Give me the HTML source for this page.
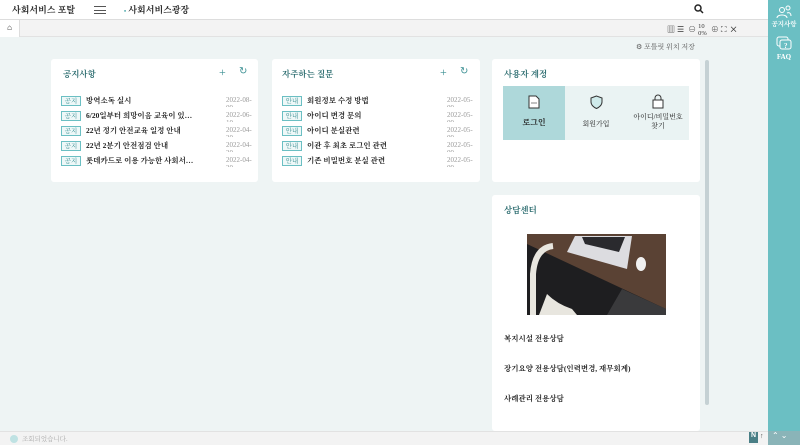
<!DOCTYPE html>
<html><head><meta charset="utf-8"><style>
*{margin:0;padding:0;box-sizing:border-box}
body{width:800px;height:445px;overflow:hidden;background:#eef4f4;font-family:"Liberation Serif","Noto Serif CJK SC",serif;color:#222;position:relative;font-size:8px}
.abs{position:absolute}
.top{left:0;top:0;width:768px;height:20px;background:#fff;border-bottom:1px solid #ddd}
.tabs{left:0;top:20px;width:768px;height:17px;background:#f3f3f3;border-bottom:1px solid #e2e2e2}
.side{left:768px;top:0;width:32px;height:445px;background:#6bbfc3;color:#fff;text-align:center;font-weight:bold}
.card{background:#fff;border-radius:3px}
.title{color:#2a6b6e;font-weight:bold;font-size:8.5px}
.row{position:absolute;left:10px;height:12px;font-size:7.5px;white-space:nowrap;font-weight:bold}
.tag{display:inline-block;border:1px solid #6bbfc3;color:#3a8f92;background:#eef8f8;font-size:6.5px;width:20px;text-align:center;height:10px;line-height:9px;margin-right:5px;vertical-align:middle;font-weight:normal}
.date{position:absolute;left:165px;color:#999;font-size:7px;top:1px;line-height:8px;height:11px;overflow:hidden;width:32px;font-weight:normal}
.ic{color:#3a8f92;font-size:12px;position:absolute;top:8px}
</style></head><body>
<div class="abs top">
 <div class="abs" style="left:12px;top:3px;font-size:9px;font-weight:bold">사회서비스 포탈</div>
 <div class="abs" style="left:94px;top:6px;width:12px;height:8px;border-top:1px solid #555;border-bottom:1px solid #555"><div style="margin-top:2.5px;border-top:1px solid #555"></div></div>
 <div class="abs" style="left:124px;top:3px;font-size:9px;font-weight:bold"><span style="color:#3a9fa3;font-size:6px">•</span> 사회서비스광장</div>
 <svg class="abs" style="left:694px;top:4px" width="10" height="10"><circle cx="4" cy="4" r="3" fill="none" stroke="#222" stroke-width="1.5"/><line x1="6.5" y1="6.5" x2="9" y2="9" stroke="#222" stroke-width="1.5"/></svg>
</div>
<div class="abs tabs">
 <div class="abs" style="left:0;top:0;width:20px;height:17px;background:#fff;border-right:1px solid #ddd;text-align:center;font-size:8px;line-height:16px">⌂</div>
 <div class="abs" style="left:667px;top:3px;font-size:8px;color:#333;white-space:nowrap">▥ ☰ &nbsp;⊖ <span style="display:inline-block;font-size:6.5px;line-height:7px;vertical-align:middle">10<br>0%</span> &nbsp;⊕ ⛶ &nbsp;✕</div>
</div>
<div class="abs" style="left:636px;top:42px;font-size:7px;color:#555">⚙ 포틀릿 위치 저장</div>
<div class="abs side">
 <svg style="margin-top:5px" width="16" height="14"><circle cx="6" cy="5" r="2.5" fill="none" stroke="#fff"/><path d="M1 13c0-4 10-4 10 0" fill="none" stroke="#fff"/><circle cx="12" cy="3" r="2" fill="none" stroke="#fff"/><path d="M11 8c2-1 4 0 4 3" fill="none" stroke="#fff"/></svg>
 <div style="font-size:6.5px;margin-top:-2px">공지사항</div>
 <svg style="margin-top:8px" width="16" height="15"><rect x="1" y="1" width="11" height="9" rx="2" fill="none" stroke="#fff"/><rect x="4" y="4" width="11" height="9" rx="2" fill="#6bbfc3" stroke="#fff"/><text x="8" y="12" font-size="7" fill="#fff">?</text></svg>
 <div style="font-size:7px">FAQ</div>
</div>
<div class="abs" style="left:705px;top:60px;width:4px;height:345px;background:#c5d1d4;border-radius:2px"></div>

<div class="abs card" style="left:51px;top:59px;width:207px;height:123px">
 <div class="abs title" style="left:12px;top:9px">공지사항</div>
 <div class="ic" style="left:168px;top:6px">+</div><div class="ic" style="left:188px;top:7px;font-size:10px">↻</div>
 <div class="row" style="top:36px"><span class="tag">공지</span>방역소독 실시<span class="date">2022-08-<br>09</span></div>
 <div class="row" style="top:51px"><span class="tag">공지</span>6/20일부터 희망이음 교육이 있…<span class="date">2022-06-<br>10</span></div>
 <div class="row" style="top:66px"><span class="tag">공지</span>22년 정기 안전교육 일정 안내<span class="date">2022-04-<br>20</span></div>
 <div class="row" style="top:81px"><span class="tag">공지</span>22년 2분기 안전점검 안내<span class="date">2022-04-<br>20</span></div>
 <div class="row" style="top:96px"><span class="tag">공지</span>롯데카드로 이용 가능한 사회서…<span class="date">2022-04-<br>20</span></div>
</div>
<div class="abs card" style="left:272px;top:59px;width:208px;height:123px">
 <div class="abs title" style="left:10px;top:9px">자주하는 질문</div>
 <div class="ic" style="left:168px;top:6px">+</div><div class="ic" style="left:188px;top:7px;font-size:10px">↻</div>
 <div class="row" style="top:36px"><span class="tag">안내</span>회원정보 수정 방법<span class="date">2022-05-<br>09</span></div>
 <div class="row" style="top:51px"><span class="tag">안내</span>아이디 변경 문의<span class="date">2022-05-<br>09</span></div>
 <div class="row" style="top:66px"><span class="tag">안내</span>아이디 분실관련<span class="date">2022-05-<br>09</span></div>
 <div class="row" style="top:81px"><span class="tag">안내</span>이관 후 최초 로그인 관련<span class="date">2022-05-<br>09</span></div>
 <div class="row" style="top:96px"><span class="tag">안내</span>기존 비밀번호 분실 관련<span class="date">2022-05-<br>09</span></div>
</div>
<div class="abs card" style="left:492px;top:59px;width:208px;height:123px">
 <div class="abs title" style="left:12px;top:9px">사용자 계정</div>
 <div class="abs" style="left:11px;top:27px;width:186px;height:54px;background:#eaf3f3"></div>
 <div class="abs" style="left:11px;top:27px;width:62px;height:54px;background:#aed8da;text-align:center">
  <svg style="margin-top:9px" width="12" height="14"><path d="M1 1h7l3 3v9H1z" fill="#fff" stroke="#333"/><line x1="3" y1="8" x2="9" y2="8" stroke="#333" stroke-width=".6"/></svg>
  <div style="font-size:8px;font-weight:bold;margin-top:6px">로그인</div></div>
 <div class="abs" style="left:73px;top:27px;width:62px;height:54px;text-align:center">
  <svg style="margin-top:9px" width="13" height="14"><path d="M6.5 1L1 3v4c0 3 3 5.5 5.5 6.5C9 12.5 12 10 12 7V3z" fill="#cfeaea" stroke="#333"/></svg>
  <div style="font-size:7px;margin-top:8px">회원가입</div></div>
 <div class="abs" style="left:135px;top:27px;width:62px;height:54px;text-align:center">
  <svg style="margin-top:8px" width="12" height="15"><path d="M3 6V4a3 3 0 016 0v2" fill="none" stroke="#333"/><rect x="1" y="6" width="10" height="8" fill="#fff" stroke="#333"/></svg>
  <div style="font-size:7px;line-height:9px;margin-top:2px">아이디/비밀번호<br>찾기</div></div>
</div>
<div class="abs card" style="left:492px;top:195px;width:208px;height:236px">
 <div class="abs title" style="left:12px;top:9px">상담센터</div>
 <svg class="abs" style="left:35px;top:39px" width="139" height="81" viewBox="0 0 139 81">
  <rect width="139" height="81" fill="#1e1e20"/>
  <polygon points="0,0 139,0 139,75 0,10" fill="#5a4234"/>
  <polygon points="95,55 139,75 139,81 80,81" fill="#3a3a3c"/>
  <polygon points="48,2 105,2 100,35 40,18" fill="#dcdce0" transform="skewY(0)"/>
  <polygon points="55,3 98,3 92,18 58,10" fill="#2a2a2e"/>
  <ellipse cx="114" cy="30" rx="5" ry="7" fill="#f0f0f0"/>
  <path d="M6 81 V40 Q8 14 26 12" fill="none" stroke="#e8e6df" stroke-width="6"/>
  <path d="M12 81 L20 60 Q30 70 45 75 L50 81Z" fill="#e8e6df"/>
 </svg>
 <div class="abs" style="left:12px;top:138px;font-size:7.5px;font-weight:bold">복지시설 전용상담</div>
 <div class="abs" style="left:12px;top:168px;font-size:7.5px;font-weight:bold">장기요양 전용상담(인력변경, 재무회계)</div>
 <div class="abs" style="left:12px;top:198px;font-size:7.5px;font-weight:bold">사례관리 전용상담</div>
</div>
<div class="abs" style="left:0;top:431px;width:768px;height:14px;background:#f3f3f3;border-top:1px solid #e2e2e2">
 <div class="abs" style="left:10px;top:3px;width:8px;height:8px;border-radius:4px;background:#bfe2e3"></div>
 <div class="abs" style="left:22px;top:2px;font-size:6.5px;color:#aaa">조회되었습니다.</div>
</div>
<div class="abs" style="left:749px;top:432px;width:9px;height:11px;background:#4a7f86;color:#fff;font-size:7px;font-weight:bold;text-align:center;font-family:'Liberation Sans',sans-serif">N</div>
<div class="abs" style="left:760px;top:432px;font-size:7px;color:#555">↑</div>
<div class="abs" style="left:768px;top:431px;width:32px;height:14px;background:#8ab4b8;color:#fff;font-size:8px;padding-left:4px">⌃ ⌄</div>
</body></html>
